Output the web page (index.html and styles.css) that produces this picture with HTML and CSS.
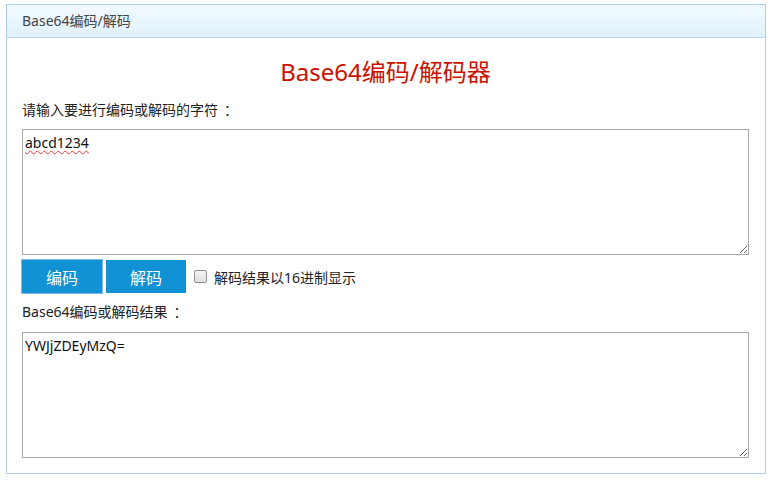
FILE: index.html
```html
<!DOCTYPE html>
<html lang="zh-CN">
<head>
<meta charset="utf-8">
<title>Base64编码/解码</title>
<link rel="stylesheet" href="styles.css">
</head>
<body>
<div class="panel">
  <div class="panel-head">Base64编码/解码</div>
  <div class="panel-body">
    <h1 class="title">Base64编码/解码器</h1>
    <div class="label">请输入要进行编码或解码的字符<span class="colon">：</span></div>
    <div class="box" contenteditable="true"><span class="typo">abcd1234</span></div>
    <div class="actions">
      <button class="btn btn-focus">编码</button>
      <button class="btn">解码</button>
      <label class="check"><span class="cb"></span>解码结果以16进制显示</label>
    </div>
    <div class="label label2">Base64编码或解码结果<span class="colon">：</span></div>
    <div class="box" contenteditable="true">YWJjZDEyMzQ=</div>
  </div>
</div>
</body>
</html>
```
FILE: styles.css
```css
* { box-sizing: border-box; }
html, body { margin: 0; padding: 0; background: #fff; }
body {
  font-family: "Noto Sans", "Noto Sans CJK SC", sans-serif;
  font-size: 14px;
  color: #333;
  padding: 4px 4px 0 6px;
}
.panel {
  width: 760px;
  height: 470px;
  border: 1px solid #a9cdef;
  display: flex;
  flex-direction: column;
}
.panel-head {
  height: 34px;
  line-height: 32px;
  padding-left: 15px;
  border-bottom: 1px solid #b9d6f0;
  background: linear-gradient(#f2faff, #e0f1fd);
  color: #444;
  font-size: 14px;
}
.panel-body {
  padding: 18px 16px 15px 15px;
  display: flex;
  flex-direction: column;
}
.title {
  margin: 0;
  font-weight: normal;
  text-align: center;
  color: #cc1100;
  font-size: 24px;
  line-height: 32px;
}
.label {
  line-height: 20px;
  margin: 12px 0 9px;
  color: #222;
}
.label2 { margin: 9px 0 10px; }
.colon {
  padding-left: 6px;
}
.box {
  width: 727px;
  height: 126px;
  border: 1px solid #a9a9a9;
  padding: 3px 2px;
  font-size: 14px;
  line-height: 20px;
  color: #111;
  overflow: auto;
  resize: both;
  outline: none;
}
.typo {
  text-decoration: underline wavy #e23a3a;
  text-decoration-thickness: 1px;
  text-underline-offset: 2px;
}
.actions {
  margin-top: 5px;
  height: 33px;
  display: flex;
  align-items: center;
  gap: 4px;
}
.btn {
  width: 80px;
  height: 33px;
  border: none;
  background: #1192d4;
  color: #fff;
  font-family: inherit;
  font-size: 16px;
  padding: 0;
}
.btn-focus {
  box-shadow: 0 0 0 1px #7cb8ee;
}
.check {
  display: flex;
  align-items: center;
  margin-left: 4px;
  color: #222;
  font-size: 14px;
}
.cb {
  width: 13px;
  height: 13px;
  border: 1px solid #8f8f8f;
  border-radius: 2px;
  background: linear-gradient(#f4f4f4, #dedede);
  margin-right: 7px;
}
```
